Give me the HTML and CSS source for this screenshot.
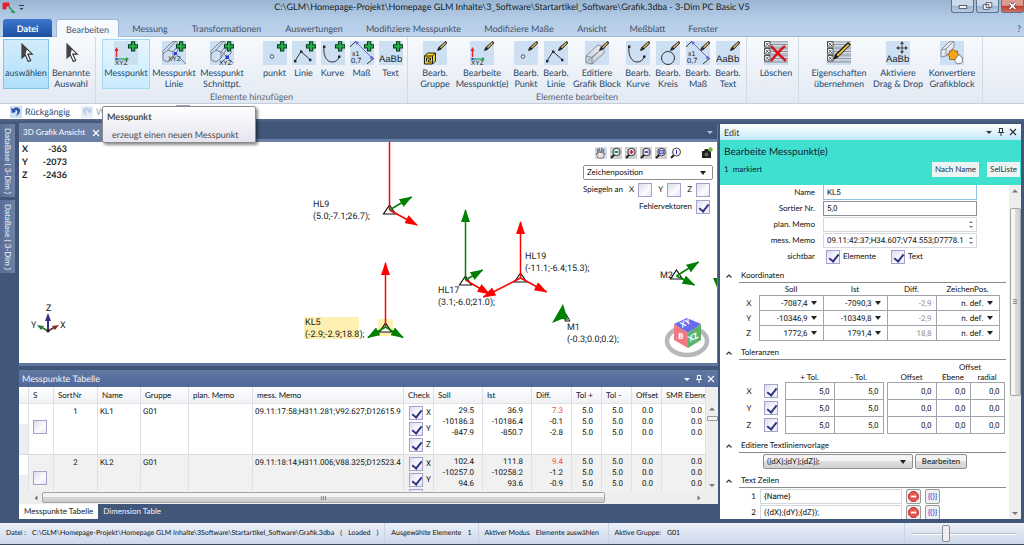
FILE: index.html
```html
<!DOCTYPE html>
<html lang="de">
<head>
<meta charset="utf-8">
<title>Grafik.3dba - 3-Dim PC Basic V5</title>
<link rel="stylesheet" href="styles.css">
</head>
<body>
<svg class="defs" aria-hidden="true">
  <defs>
    <linearGradient id="gPrism" x1="0" y1="0" x2="0" y2="1"><stop offset="0" stop-color="#e9edf2"/><stop offset="1" stop-color="#c3ccd6"/></linearGradient>
    <symbol id="bg" viewBox="0 0 24 24"><rect width="24" height="24" fill="#cddff3"/></symbol>
    <symbol id="plus" viewBox="0 0 24 24"><path d="M17.500.8h3.200v3h3v3.200h-3v3h-3.200v-3h-3v-3.200h3z" fill="#22b04c" stroke="#0d3d1b" stroke-width="1.100"/></symbol>
    <symbol id="pencil" viewBox="0 0 24 24"><path d="M14.500 9.500l1-2.800L22.500.5l1.500 1.300-6.500 6.700z" fill="#2b2415" stroke="#222" stroke-width=".8"/><path d="M17.500 6.700l5-5" stroke="#dfb968" stroke-width="1.400"/></symbol>
    <symbol id="arrow" viewBox="0 0 24 24"><path d="M8 3v14l3.300-3 3 6.500 2.400-1.100-3-6.300h4.600z" fill="#fff" stroke="#333" stroke-width="1.100"/><path d="M8 3v14l3.300-3 1.700-6z" fill="#444"/></symbol>
    <symbol id="axes" viewBox="0 0 24 24"><path d="M2.500 16V8" stroke="#e8202a" stroke-width="1.400"/><path d="M.5 10l2-4 2 4z" fill="#e8202a"/><path d="M1.500 18h11" stroke="#21a045" stroke-width="1.200"/><path d="M12 16l3 2-3 2z" fill="#21a045"/><circle cx="2.500" cy="18" r="1.200" fill="#3344dd"/><text x="1" y="24" font-size="6.500" class="ic">XYZ</text></symbol>
    <symbol id="prism" viewBox="0 0 24 24"><path d="M1 13l5-4 5 2v6l-5 4-5-2zM1 13V10L10 1l4-1 2 3v6L11 17M6 9L14 0M11 11l5-6" fill="none" stroke="#77818c" stroke-width="1"/></symbol>
    <symbol id="block" viewBox="0 0 24 24"><path d="M1 12l12-11 6 2v6L7 20l-6-1.500z" fill="url(#gPrism)" stroke="#7c858f" stroke-width=".9"/><path d="M1 12l6 1.500V20M7 13.500L19 3M3 17l10-9" fill="none" stroke="#7c858f" stroke-width=".9"/></symbol>
    <symbol id="point" viewBox="0 0 24 24"><circle cx="9" cy="15.500" r="1.800" fill="#eef4fb" stroke="#444" stroke-width=".9"/></symbol>
    <symbol id="line" viewBox="0 0 24 24"><path d="M3 20l6-9.500 9 8" fill="none" stroke="#333" stroke-width="1"/><g fill="#222"><rect x="2" y="19" width="2.400" height="2.400"/><rect x="8" y="9.500" width="2.400" height="2.400"/><rect x="17" y="17.800" width="2.400" height="2.400"/></g></symbol>
    <symbol id="curve" viewBox="0 0 24 24"><path d="M3 6C2 15 6 21 11 21c4 0 6-2 7-5" fill="none" stroke="#333" stroke-width="1"/><g fill="#222"><rect x="2" y="4.500" width="2.400" height="2.400"/><rect x="17" y="14.500" width="2.400" height="2.400"/></g></symbol>
    <symbol id="circle" viewBox="0 0 24 24"><circle cx="12" cy="17" r="6.500" fill="none" stroke="#333" stroke-width="1"/></symbol>
    <symbol id="dim" viewBox="0 0 24 24"><path d="M0 6l6-6M17 23l7-6" stroke="#333" stroke-width="1"/><path d="M6 1l16 16" stroke="#6467e0" stroke-width="1"/><path d="M5 0l4 1.200L6.300 4zM23.500 18.500l-4.200-1.200 2.800-2.800z" fill="#6467e0"/><text x="2" y="14.500" font-size="7" class="ic">x1</text><text x="1" y="21.500" font-size="7.500" class="ic">0,7</text></symbol>
    <symbol id="aabb" viewBox="0 0 24 24"><text x="0" y="21" font-size="9.500" class="ic">AaBb</text></symbol>
    <symbol id="list" viewBox="0 0 24 24"><path d="M0 0h24v22H0z" fill="#aab4c0"/><path d="M6 3.500h18M6 10.500h18M6 17.500h18" stroke="#d3dae2" stroke-width="4"/><path d="M6 3.500h18M6 10.500h18M6 17.500h18" stroke="#8a94a0" stroke-width="1"/><g fill="#fff" stroke="#333" stroke-width=".8"><path d="M.5.5h5.500v5.500H.5zM.5 7.500h5.500V13H.5zM.5 14.500h5.500V20H.5z"/><path d="M1.500 1.500l3.500 3.500m0-3.500L1.500 5M1.500 8.500L5 12m0-3.500L1.500 12M1.500 15.500L5 19m0-3.500L1.500 19"/></g></symbol>
    <symbol id="lens" viewBox="0 0 12 12"><rect width="12" height="12" fill="#cfcfcf"/><path d="M1 11l4-4" stroke="#222" stroke-width="2"/><circle cx="6.500" cy="5" r="3.700" fill="#e8eef4" stroke="#333" stroke-width="1"/></symbol>
    <symbol id="pin" viewBox="0 0 8 8"><path d="M2 .5h4M2.500.5v4M5.500.5v4M1 4.500h6M4 4.500V8" stroke="currentColor" fill="none"/></symbol>
    <symbol id="x" viewBox="0 0 8 8"><path d="M1 1l6 6M7 1L1 7" stroke="currentColor" stroke-width="1.200" fill="none"/></symbol>
    <symbol id="down" viewBox="0 0 8 8"><path d="M1 3h6L4 6z" fill="currentColor"/></symbol>
    <symbol id="up" viewBox="0 0 8 8"><path d="M1 5.500h6L4 2.500z" fill="currentColor"/></symbol>
    <symbol id="chev" viewBox="0 0 8 8"><path d="M1.500 5.500L4 3l2.500 2.500" fill="none" stroke="#333" stroke-width="1.200"/></symbol>
    <symbol id="minus" viewBox="0 0 12 12"><path d="M4 .5h4L11.500 4v4L8 11.500H4L.5 8V4z" fill="#e5554b" stroke="#b53a32"/><path d="M3 6h6" stroke="#fff" stroke-width="2"/></symbol>
    <marker id="mr" markerUnits="userSpaceOnUse" markerWidth="13" markerHeight="9" refX="12" refY="4.500" orient="auto"><path d="M0 0l13 4.500L0 9z" fill="#f00"/></marker>
    <marker id="mg" markerUnits="userSpaceOnUse" markerWidth="13" markerHeight="9" refX="12" refY="4.500" orient="auto"><path d="M0 0l13 4.500L0 9z" fill="#008000"/></marker>
  </defs>
</svg>

<header class="titlebar">
  <div class="side-l"><svg class="applogo" viewBox="0 0 22 12"><path d="M1 1h6v3H4v3H1zM7 4l1 3" fill="#e3202c" stroke="#e3202c"/><path d="M8 6l5 5M9 10h4" stroke="#2a9a4a" stroke-width="1.300" fill="none"/><path d="M17 3h5v1h-5zM17.500 6h4l-2 2z" fill="#334"/></svg></div>
  <h1 class="title">C:\GLM\Homepage-Projekt\Homepage GLM Inhalte\3_Software\Startartikel_Software\Grafik.3dba - 3-Dim PC Basic V5</h1>
  <div class="winbtns">
    <button class="winbtn" aria-label="Minimieren"><svg viewBox="0 0 22 12"><rect x="7.500" y="5.500" width="8" height="3" fill="#fff" stroke="#556"/></svg></button>
    <button class="winbtn" aria-label="Wiederherstellen"><svg viewBox="0 0 22 12"><path d="M9.500 2.500h6v5h-6zM6.500 4.500h6v5h-6z" fill="#fff" stroke="#556"/></svg></button>
    <button class="winbtn close" aria-label="Schließen"><svg viewBox="0 0 22 12"><path d="M8 3l6 6M14 3L8 9" stroke="#533" stroke-width="3"/><path d="M8 3l6 6M14 3L8 9" stroke="#fff" stroke-width="1.800"/></svg></button>
  </div>
</header>

<nav class="tabs">
  <button class="tab file">Datei</button>
  <button class="tab active">Bearbeiten</button>
  <button class="tab t3">Messung</button>
  <button class="tab t4">Transformationen</button>
  <button class="tab t5">Auswertungen</button>
  <button class="tab t6">Modifiziere Messpunkte</button>
  <button class="tab t7">Modifiziere Maße</button>
  <button class="tab t8">Ansicht</button>
  <button class="tab t9">Meßblatt</button>
  <button class="tab t10">Fenster</button>
  <button class="tab help" aria-label="Hilfe">?</button>
</nav>

<section class="ribbon">
  <div class="group">
    <div class="tools first">
      <button class="tool w46 sel"><svg><use href="#arrow"/></svg>auswählen</button>
      <button class="tool w42"><svg><use href="#arrow"/></svg>Benannte<br>Auswahl</button>
    </div>
  </div>
  <div class="group">
    <div class="tools add">
      <button class="tool w48 hot"><svg><use href="#bg"/><use href="#axes"/><use href="#plus"/></svg>Messpunkt</button>
      <button class="tool w48"><svg><use href="#bg"/><use href="#prism"/><path d="M15 14l9 9" stroke="#778"/><rect x="12" y="11" width="3" height="3" fill="#2a3be0"/><text x="6" y="20" font-size="6.500" class="ic">XYZ</text><use href="#plus"/></svg>Messpunkt<br>Linie</button>
      <button class="tool w48"><svg><use href="#bg"/><use href="#prism"/><path d="M12 11l11 11M22 11L11 22" stroke="#778"/><rect x="15.500" y="14.500" width="3.500" height="3.500" fill="#2a3be0"/><text x="9" y="24" font-size="6.500" class="ic">XYZ</text><use href="#plus"/></svg>Messpunkt<br>Schnittpt.</button>
      <button class="tool w29 gapped"><svg><use href="#bg"/><use href="#point"/><use href="#plus"/></svg>punkt</button>
      <button class="tool w29"><svg><use href="#bg"/><use href="#line"/><use href="#plus"/></svg>Linie</button>
      <button class="tool w29"><svg><use href="#bg"/><use href="#curve"/><use href="#plus"/></svg>Kurve</button>
      <button class="tool w29"><svg><use href="#bg"/><use href="#dim"/><use href="#plus"/></svg>Maß</button>
      <button class="tool w29"><svg><use href="#bg"/><use href="#aabb"/><use href="#plus"/></svg>Text</button>
    </div>
    <div class="caption">Elemente hinzufügen</div>
  </div>
  <div class="group">
    <div class="tools edit">
      <button class="tool w36"><svg><use href="#bg"/><path d="M1.500 15l3-3h8v8l-3 3h-8z" fill="#f6d21c" stroke="#222"/><path d="M1.500 15h8v8M9.500 15l3-3M3.500 20.500v-3.500h4v2h-2v2h3" fill="none" stroke="#222"/><use href="#pencil"/></svg>Bearb.<br>Gruppe</button>
      <button class="tool w58"><svg><use href="#bg"/><use href="#axes"/><use href="#pencil"/></svg>Bearbeite<br>Messpunkt(e)</button>
      <button class="tool w30"><svg><use href="#bg"/><use href="#point"/><use href="#pencil"/></svg>Bearb.<br>Punkt</button>
      <button class="tool w30"><svg><use href="#bg"/><use href="#line"/><use href="#pencil"/></svg>Bearb.<br>Linie</button>
      <button class="tool w52"><svg><use href="#bg"/><use href="#block" y="3"/><use href="#pencil"/></svg>Editiere<br>Grafik Block</button>
      <button class="tool w30"><svg><use href="#bg"/><use href="#curve"/><use href="#pencil"/></svg>Bearb.<br>Kurve</button>
      <button class="tool w30"><svg><use href="#bg"/><use href="#circle"/><use href="#pencil"/></svg>Bearb.<br>Kreis</button>
      <button class="tool w30"><svg><use href="#bg"/><use href="#dim"/><use href="#pencil"/></svg>Bearb.<br>Maß</button>
      <button class="tool w30"><svg><use href="#bg"/><use href="#aabb"/><use href="#pencil"/></svg>Bearb.<br>Text</button>
    </div>
    <div class="caption">Elemente bearbeiten</div>
  </div>
  <div class="group">
    <div class="tools del">
      <button class="tool w40"><svg><use href="#bg"/><use href="#list"/><path d="M7 5c4 4 9 10 15 15M21 5C16 9 11 15 7 20" stroke="#d8141c" stroke-width="2.500" fill="none"/></svg>Löschen</button>
    </div>
  </div>
  <div class="group">
    <div class="tools props">
      <button class="tool w62"><svg><use href="#bg"/><use href="#list"/><path d="M6 19l2-5.500L21 1l3 2.500L11 16.500z" fill="#1d1a12"/><path d="M9.500 14L21 2.800l1.500 1.200L11 15.500z" fill="#e6b84c"/></svg>Eigenschaften<br>übernehmen</button>
      <button class="tool w56"><svg><use href="#bg"/><path d="M16 2v10M11 7h10" stroke="#444"/><path d="M16 0l2 3h-4zM16 13l2-3h-4zM10 7l3-2v4zM22 7l-3-2v4z" fill="#444"/><use href="#aabb"/></svg>Aktiviere<br>Drag &amp; Drop</button>
      <button class="tool w52"><svg><use href="#bg"/><path d="M1 9l8-8 5-1v6l-8 9-5 1zM1 9l5-1v7M6 8l8-8" fill="#e6eaf0" stroke="#88919c"/><path d="M9.500 10h2c0-2 3-2 3 0h3v2.500c2 0 2 3 0 3v3h-8v-3c-2 0-2-3 0-3z" fill="#f5a41a" stroke="#8a5a10" stroke-width=".8"/><path d="M16 16l2-1c0-2 3-1 3 1l2 1-1 2c1 1 1 3-1 3l-4 1-1-2c-2 0-2-2 0-3z" fill="#fff" stroke="#777" stroke-width=".9"/></svg>Konvertiere<br>Grafikblock</button>
    </div>
  </div>
  <div class="tooltip" role="tooltip"><strong>Messpunkt</strong><span>erzeugt einen neuen Messpunkt</span></div>
</section>

<div class="quickbar">
  <button class="quick"><svg viewBox="0 0 12 12"><rect width="12" height="12" fill="#cddff3"/><path d="M1 2l1 5 4-1-1.500-1.200C7 3 9 5 6 10c6-3 5-9-.5-8.500L3 3z" fill="#2a50a8"/></svg>Rückgängig</button>
  <button class="quick" disabled><svg viewBox="0 0 12 12"><rect width="12" height="12" fill="#cddff3"/><path d="M11 2l-1 5-4-1 1.500-1.200C5 3 3 5 6 10 0 7 1 1 6.500 1.500L9 3z" fill="#7a9ad0"/></svg>Wiederherstellen</button>
  <input class="check" type="checkbox" aria-label="Option">
</div>

<main class="workspace">
  <aside class="dock">
    <button class="docktab">DataBase ( 3-Dim )</button>
    <button class="docktab">DataBase ( 3-Dim )</button>
  </aside>

  <div class="center">
    <section class="view">
      <div class="viewtabs">
        <button class="viewtab">3D Grafik Ansicht <svg class="g8"><use href="#x"/></svg></button>
        <svg class="g8 more"><use href="#down"/></svg>
      </div>
      <div class="canvas">
        <svg class="scene">
          <g transform="translate(-19 -142)">
            <rect x="304" y="317" width="55" height="22" fill="#fdf0b0"/>
            <rect x="378" y="319" width="15" height="17" fill="#fdf0b0"/>
            <g fill="#fff" stroke="#111" stroke-width="1.200">
              <path d="M389.500 205l-6 9h12zM465.500 276l-6 9h12zM520.500 273l-6 9h12zM385.500 323l-6 9h12zM676.500 270l-6 9h12z"/>
            </g>
            <g fill="none" stroke="#f00" stroke-width="1.500" marker-end="url(#mr)">
              <path d="M389.500 210l27.500 15"/>
              <path d="M385.500 328V263"/>
              <path d="M465.500 280l24 14"/>
              <path d="M520.500 278V222"/>
              <path d="M520.500 278l26 14"/>
              <path d="M520.500 278l-37 19"/>
            </g>
            <path d="M389.500 210V142" stroke="#f00" stroke-width="1.500"/>
            <g fill="none" stroke="#008000" stroke-width="1.500" marker-end="url(#mg)">
              <path d="M389.500 210l22-13"/>
              <path d="M465.500 280V210"/>
              <path d="M465.500 280l17-10"/>
              <path d="M385.500 327l17.500 10.500"/>
              <path d="M385.500 327l-17.500 10.500"/>
              <path d="M676.500 276l22-14"/>
              <path d="M676.500 276l18 9"/>
            </g>
            <path d="M566 314l4 7h-5z" fill="#fff" stroke="#111"/>
            <path d="M563 304l5 16-6-1-10 4z" fill="#008000"/>
            <path d="M713 278h6v14z" fill="#008000"/>
            <g class="scenetext">
              <text x="313" y="207">HL9</text><text x="313" y="219">(5.0;-7.1;26.7);</text>
              <text x="438" y="293">HL17</text><text x="438" y="305">(3.1;-6.0;21.0);</text>
              <text x="305" y="325">KL5</text><text x="305" y="337">(-2.9;-2.9;18.8);</text>
              <text x="525" y="259">HL19</text><text x="525" y="271">(-11.1;-6.4;15.3);</text>
              <text x="567" y="330">M1</text><text x="567" y="342">(-0.3;0.0;0.2);</text>
              <text x="660" y="278">M2</text>
              <text x="46" y="311">Z</text><text x="31" y="328">Y</text><text x="60" y="328">X</text>
            </g>
            <path d="M48 331V318" stroke="#32327e" stroke-width="2"/><path d="M45 321l3-8 3 8z" fill="#32327e"/>
            <path d="M48 331l-7-4" stroke="#2c7a36" stroke-width="2"/><path d="M37 325l7 1-3 4z" fill="#2c7a36"/>
            <path d="M48 331l7-4" stroke="#7c3030" stroke-width="2"/><path d="M59 325l-7 1 3 4z" fill="#7c3030"/>
            <circle cx="48" cy="331" r="1.500" fill="#223"/>
          </g>
        </svg>
        <table class="coords">
          <tr><th>X</th><td>-363</td></tr>
          <tr><th>Y</th><td>-2073</td></tr>
          <tr><th>Z</th><td>-2436</td></tr>
        </table>
        <div class="viewopts">
          <div class="lenses">
            <button aria-label="Verschieben"><svg viewBox="0 0 12 12"><rect width="12" height="12" fill="#cfdcec"/><path d="M3 11L1 6l2 1-1-5 2 4 0-5 1.500 5L7 1v5l2-4-1 5 2-1-2 5z" fill="#f3e3d6" stroke="#556" stroke-width=".7"/></svg></button>
            <button aria-label="Zoom"><svg viewBox="0 0 12 12"><use href="#lens"/><path d="M4.500 5h4" stroke="#2a9a3a" stroke-width="2"/></svg></button>
            <button aria-label="Vergrößern"><svg viewBox="0 0 12 12"><use href="#lens"/><path d="M4.500 5h4M6.500 3v4" stroke="#d22" stroke-width="1.500"/></svg></button>
            <button aria-label="Verkleinern"><svg viewBox="0 0 12 12"><use href="#lens"/><path d="M4.500 5h4" stroke="#22c" stroke-width="1.500"/></svg></button>
            <button aria-label="Fenster"><svg viewBox="0 0 12 12"><use href="#lens"/><path d="M4.500 3.500h4v3h-4z" fill="#aab8f8" stroke="#33c" stroke-width=".8"/></svg></button>
            <button aria-label="1 zu 1"><svg viewBox="0 0 12 12"><path d="M1 11l4-4" stroke="#222" stroke-width="2"/><circle cx="6.500" cy="5" r="4" fill="#f4f4f4" stroke="#444"/><path d="M6.500 3v4" stroke="#33c"/></svg></button>
            <button class="cam" aria-label="Foto"><svg viewBox="0 0 12 12"><path d="M1 4h2l1-2h3l1 2h2v7H1z" fill="#222"/><circle cx="5.500" cy="7.500" r="2" fill="#666"/><circle cx="9.500" cy="2.500" r="2.200" fill="#7ab53a"/></svg></button>
          </div>
          <span class="pick wide"><select aria-label="Ansicht"><option>Zeichenposition</option></select></span>
          <div class="mirror"><span>Spiegeln an</span>
            <label>X <input class="check" type="checkbox"></label>
            <label>Y <input class="check" type="checkbox"></label>
            <label>Z <input class="check" type="checkbox"></label>
          </div>
          <div class="mirror"><label>Fehlervektoren <input class="check" type="checkbox" checked></label></div>
        </div>
        <svg class="cube" viewBox="0 0 46 42"><ellipse cx="23" cy="24" rx="20" ry="14" fill="none" stroke="#b8b8bc" stroke-width="4.500"/><path d="M10 7L23 1l14 6-13 9z" fill="#6a6af0"/><path d="M10 7l14 9v15l-14-8z" fill="#f07a80"/><path d="M37 7l-13 9v15l13-8z" fill="#5cb268"/><g fill="#fff" font-weight="bold" font-family="Open Sans" font-size="8"><text transform="translate(18 11) rotate(-28)">XY</text><text x="14" y="22">B</text><text transform="translate(26 25) rotate(-28)">XZ</text></g></svg>
      </div>
    </section>

    <section class="tablepanel">
      <header class="phead"><h2>Messpunkte Tabelle</h2><svg class="g8"><use href="#down"/></svg><svg class="g8"><use href="#pin"/></svg><svg class="g8"><use href="#x"/></svg></header>
      <div class="tarea">
        <div class="tclip">
          <table class="grid">
            <colgroup><col class="c10"><col class="c25"><col class="c44"><col class="c43"><col class="c48"><col class="c64"><col><col class="c30"><col class="c49"><col class="c49"><col class="c40"><col class="c30"><col class="c30"><col class="c30"><col class="c44"></colgroup>
            <thead><tr><th></th><th>S</th><th>SortNr</th><th>Name</th><th>Gruppe</th><th>plan. Memo</th><th>mess. Memo</th><th>Check</th><th>Soll</th><th>Ist</th><th>Diff.</th><th>Tol +</th><th>Tol -</th><th>Offset</th><th>SMR Ebene</th></tr></thead>
            <tbody>
              <tr><td class="rowhead"></td><td class="pickrow"><input class="check" type="checkbox" aria-label="Zeile 1"></td><td class="c">1</td><td>KL1</td><td>G01</td><td></td><td>09.11:17:58;H311.281;V92.627;D12615.9</td>
                <td class="checks"><label><input class="check" type="checkbox" checked>X</label><label><input class="check" type="checkbox" checked>Y</label><label><input class="check" type="checkbox" checked>Z</label></td>
                <td class="n">29.5<br>-10186.3<br>-847.9</td><td class="n">36.9<br>-10186.4<br>-850.7</td><td class="n"><em>7.3</em><br>-0.1<br>-2.8</td><td class="n">5.0<br>5.0<br>5.0</td><td class="n">5.0<br>5.0<br>5.0</td><td class="n">0.0<br>0.0<br>0.0</td><td class="n last">0.0<br>0.0<br>0.0</td></tr>
              <tr class="alt"><td class="rowhead"></td><td class="pickrow"><input class="check" type="checkbox" aria-label="Zeile 2"></td><td class="c">2</td><td>KL2</td><td>G01</td><td></td><td>09.11:18:14;H311.006;V88.325;D12523.4</td>
                <td class="checks"><label><input class="check" type="checkbox" checked>X</label><label><input class="check" type="checkbox" checked>Y</label><label><input class="check" type="checkbox" checked>Z</label></td>
                <td class="n">102.4<br>-10257.0<br>94.6</td><td class="n">111.8<br>-10258.2<br>93.6</td><td class="n"><em>9.4</em><br>-1.2<br>-0.9</td><td class="n">5.0<br>5.0<br>5.0</td><td class="n">5.0<br>5.0<br>5.0</td><td class="n">0.0<br>0.0<br>0.0</td><td class="n last">0.0<br>0.0<br>0.0</td></tr>
            </tbody>
          </table>
        </div>
        <div class="vbar"><svg class="g8"><use href="#up"/></svg><i class="vthumb"></i><svg class="g8 end"><use href="#down"/></svg></div>
      </div>
      <div class="hbar"><svg class="g8"><path d="M5.500 1.500v5L2.500 4z" fill="#777"/></svg><i class="hthumb"></i><svg class="g8 end"><path d="M2.500 1.500v5l3-2.500z" fill="#777"/></svg></div>
      <div class="btabs"><button class="btab on">Messpunkte Tabelle</button><button class="btab">Dimension Table</button></div>
    </section>
  </div>

  <aside class="edit-panel">
    <header class="ehead"><h2>Edit</h2><svg class="g8"><use href="#down"/></svg><svg class="g8"><use href="#pin"/></svg><svg class="g8"><use href="#x"/></svg></header>
    <div class="banner">
      <h3>Bearbeite Messpunkt(e)</h3>
      <div class="brow"><span>1&nbsp; markiert</span><button class="flat">Nach Name</button><button class="flat">SelListe</button></div>
    </div>
    <div class="ebody">
      <form class="form">
        <div class="fields">
          <label for="name">Name</label><input id="name" class="txt focus" value="KL5">
          <label for="sort">Sortier Nr.</label><input id="sort" class="txt strong" value="5,0">
          <label for="plan">plan. Memo</label><span class="spin"><input id="plan" class="txt" value=""></span>
          <label for="mess">mess. Memo</label><span class="spin"><input id="mess" class="txt" value="09.11:42:37;H34.607;V74.553;D7778.1"></span>
          <span class="lab">sichtbar</span><span class="vis"><label><input class="check" type="checkbox" checked>Elemente</label><label><input class="check" type="checkbox" checked>Text</label></span>
        </div>

        <h4 class="sec"><svg class="g8"><use href="#chev"/></svg><span>Koordinaten</span></h4>
        <table class="coordtab">
          <colgroup><col class="c34"><col class="c64"><col class="c64"><col class="c49"><col class="c63"></colgroup>
          <tr><th></th><th>Soll</th><th>Ist</th><th>Diff.</th><th>ZeichenPos.</th></tr>
          <tr><th class="ax">X</th><td><span class="pick"><select aria-label="Soll X"><option>-7087,4</option></select></span></td><td><span class="pick"><select aria-label="Ist X"><option>-7090,3</option></select></span></td><td class="dim">-2,9</td><td><span class="pick"><select aria-label="Pos X"><option>n. def.</option></select></span></td></tr>
          <tr><th class="ax">Y</th><td><span class="pick"><select aria-label="Soll Y"><option>-10346,9</option></select></span></td><td><span class="pick"><select aria-label="Ist Y"><option>-10349,8</option></select></span></td><td class="dim">-2,9</td><td><span class="pick"><select aria-label="Pos Y"><option>n. def.</option></select></span></td></tr>
          <tr><th class="ax">Z</th><td><span class="pick"><select aria-label="Soll Z"><option>1772,6</option></select></span></td><td><span class="pick"><select aria-label="Ist Z"><option>1791,4</option></select></span></td><td class="dim">18,8</td><td><span class="pick"><select aria-label="Pos Z"><option>n. def.</option></select></span></td></tr>
        </table>

        <h4 class="sec"><svg class="g8"><use href="#chev"/></svg><span>Toleranzen</span></h4>
        <table class="toltab">
          <colgroup><col class="c34"><col class="c26"><col class="c49"><col class="c49"><col class="c4"><col class="c49"><col class="c34"><col class="c34"></colgroup>
          <tr class="thd"><th></th><th></th><th></th><th></th><th></th><th></th><th colspan="2">Offset</th></tr>
          <tr class="thd"><th></th><th></th><th>+ Tol.</th><th>- Tol.</th><th></th><th>Offset</th><th>Ebene</th><th>radial</th></tr>
          <tr><th class="ax">X</th><td class="bare"><input class="check" type="checkbox" aria-label="X" checked></td><td><input class="num" aria-label="+ Tol. X" value="5,0"></td><td><input class="num" aria-label="- Tol. X" value="5,0"></td><td class="bare"></td><td><input class="num" aria-label="Offset X" value="0,0"></td><td><input class="num" aria-label="Ebene X" value="0,0"></td><td><input class="num" aria-label="radial X" value="0,0"></td></tr>
          <tr><th class="ax">Y</th><td class="bare"><input class="check" type="checkbox" aria-label="Y" checked></td><td><input class="num" aria-label="+ Tol. Y" value="5,0"></td><td><input class="num" aria-label="- Tol. Y" value="5,0"></td><td class="bare"></td><td><input class="num" aria-label="Offset Y" value="0,0"></td><td><input class="num" aria-label="Ebene Y" value="0,0"></td><td><input class="num" aria-label="radial Y" value="0,0"></td></tr>
          <tr><th class="ax">Z</th><td class="bare"><input class="check" type="checkbox" aria-label="Z" checked></td><td><input class="num" aria-label="+ Tol. Z" value="5,0"></td><td><input class="num" aria-label="- Tol. Z" value="5,0"></td><td class="bare"></td><td><input class="num" aria-label="Offset Z" value="0,0"></td><td><input class="num" aria-label="Ebene Z" value="0,0"></td><td><input class="num" aria-label="radial Z" value="0,0"></td></tr>
        </table>

        <h4 class="sec"><svg class="g8"><use href="#chev"/></svg><span>Editiere Textlinienvorlage</span></h4>
        <div class="template"><span class="pick wide grey"><select aria-label="Vorlage"><option>({dX};{dY};{dZ});</option></select></span><button type="button" class="btn">Bearbeiten</button></div>

        <h4 class="sec"><svg class="g8"><use href="#chev"/></svg><span>Text Zeilen</span></h4>
        <div class="lines">
          <label for="l1">1</label><input id="l1" class="txt" value="{Name}"><button type="button" class="sq" aria-label="Entfernen"><svg viewBox="0 0 12 12"><use href="#minus"/></svg></button><button type="button" class="sq br">{()}</button>
          <label for="l2">2</label><input id="l2" class="txt" value="({dX};{dY};{dZ});"><button type="button" class="sq" aria-label="Entfernen"><svg viewBox="0 0 12 12"><use href="#minus"/></svg></button><button type="button" class="sq br">{()}</button>
        </div>
      </form>
      <div class="vbar side"><svg class="g8"><use href="#up"/></svg><i class="bigthumb"></i><svg class="g8 end"><use href="#down"/></svg></div>
    </div>
  </aside>
</main>

<footer class="status">
  <div class="cell s1"><span>Datei :</span><span>C:\GLM\Homepage-Projekt\Homepage GLM Inhalte\3Software\Startartikel_Software\Grafik.3dba</span><span>(</span><span>Loaded</span><span>)</span></div>
  <div class="cell s2"><span>Ausgewählte Elemente</span><span>1</span></div>
  <div class="cell s3"><span>Aktiver Modus</span><span>Elemente auswählen</span></div>
  <div class="cell s4"><span>Aktive Gruppe:</span><span>G01</span></div>
  <div class="cell s5"><input class="zoomer" type="range" min="0" max="100" value="32" aria-label="Zoom"></div>
</footer>
</body>
</html>
```
FILE: styles.css
```css
:root {
  --ui: Lato, "Open Sans", "Noto Sans", sans-serif;
  --data: Roboto, "Liberation Sans", sans-serif;
  --navy: #42567a;
}
* { box-sizing: border-box; }
body { margin: 0; height: 100vh; display: flex; flex-direction: column; overflow: hidden; font: 8px/11px var(--ui); color: #111; background: var(--navy); text-rendering: geometricPrecision; }
button, input, select { font: inherit; color: inherit; margin: 0; padding: 0; border: 0; background: none; border-radius: 0; text-rendering: inherit; }
button { cursor: pointer; white-space: nowrap; }
h1, h2, h3, h4 { margin: 0; font-weight: normal; }
svg { display: block; flex: none; }
.defs { position: absolute; width: 0; height: 0; }
.ic { font-family: "Liberation Sans", sans-serif; fill: #222; }
.g8 { width: 8px; height: 8px; }

/* title bar */
.titlebar { flex: none; height: 19px; display: flex; align-items: flex-start; background: linear-gradient(#99b5d3, #b5cce7); }
.side-l { width: 73px; }
.applogo { width: 22px; height: 12px; margin: 2px; }
.title { flex: 1; text-align: center; font-size: 9px; line-height: 14px; color: #111a24; white-space: nowrap; }
.winbtns { display: flex; gap: 2px; }
.winbtn { width: 23px; height: 13px; border: 1px solid #5e7390; border-top: 0; border-radius: 0 0 3px 3px; background: linear-gradient(#cbd9ea 45%, #9fb5d0 50%, #b9cce3); }
.winbtn.close { background: linear-gradient(#dd9a90 45%, #c0392b 50%, #d2705c); }
.winbtn svg { width: 21px; height: 12px; }

/* ribbon tabs */
.tabs { flex: none; height: 18px; display: flex; background: linear-gradient(#b5cce7, #bdd3ec); font-size: 9px; border-bottom: 1px solid #a3b8d2; }
.tab { height: 18px; line-height: 19px; color: #3f4f66; text-align: center; }
.tab.file { margin-left: 3px; width: 49px; color: #fff; font-weight: 700; border-radius: 3px 3px 0 0; background: linear-gradient(#3c78cf, #1e4f9f); }
.tab.active { margin-left: 4px; width: 63px; color: #3f5478; background: #f6f9fd; border: 1px solid #9db6d4; border-bottom: 0; border-radius: 3px 3px 0 0; }
.t3 { width: 62px; } .t4 { width: 91px; } .t5 { width: 84px; } .t6 { width: 115px; }
.t7 { width: 96px; } .t8 { width: 50px; } .t9 { width: 61px; } .t10 { width: 50px; }
.help { margin-left: auto; width: 10px; }

/* ribbon */
.ribbon { position: relative; flex: none; height: 67px; display: flex; background: linear-gradient(#f7fafd, #e3e9f3); border-bottom: 1px solid #c2cedf; }
.group { display: flex; flex-direction: column; justify-content: space-between; border-right: 1px solid #d2dae6; }
.tools { display: flex; padding-top: 2px; }
.tools.first { padding: 2px 3px 0 3px; gap: 1px; }
.tools.add { padding-left: 6px; padding-right: 2px; }
.tools.edit { padding-left: 9px; padding-right: 3px; }
.tools.del { padding-left: 9px; padding-right: 2px; }
.tools.props { padding-left: 9px; padding-right: 4px; }
.tool { height: 50px; display: flex; flex-direction: column; align-items: center; padding-top: 1px; border: 1px solid transparent; font-size: 9px; line-height: 11px; color: #1f4566; }
.tool svg { width: 24px; height: 24px; margin-bottom: 2px; }
.tool.sel { background: linear-gradient(#d3ecfa, #b0e0fb); border-color: #7fc4ea; }
.tool.hot { background: linear-gradient(#e6f5fd, #c9ebfd); border-color: #a5d8f2; }
.gapped { margin-left: 14px; }
.w29 { width: 29px; } .w30 { width: 30px; } .w36 { width: 36px; } .w40 { width: 40px; } .w42 { width: 42px; }
.w46 { width: 46px; } .w48 { width: 48px; } .w52 { width: 52px; } .w56 { width: 56px; } .w58 { width: 58px; } .w62 { width: 62px; }
.caption { text-align: center; font-size: 9px; line-height: 13px; color: #5a6473; }
.tooltip { position: absolute; left: 102px; top: 69px; z-index: 5; width: 154px; height: 37px; padding: 4px; display: flex; flex-direction: column; gap: 7px; font-size: 9px; color: #4a4a4a; background: linear-gradient(#fff, #e4e5ef); border: 1px solid #8a8a8a; border-radius: 2px; box-shadow: 2px 2px 3px rgba(0, 0, 0, .45); }
.tooltip span { padding-left: 5px; white-space: nowrap; }

/* quick bar */
.quickbar { flex: none; height: 15px; display: flex; align-items: center; padding-left: 10px; background: #fff; }
.quick { display: flex; align-items: center; gap: 3px; width: 71px; color: #2b4a6b; font-size: 9px; }
.quick svg { width: 12px; height: 12px; }
.quick:disabled { opacity: .5; }
.quickbar .check { margin-left: 24px; }

/* controls */
.check { appearance: none; flex: none; position: relative; width: 14px; height: 14px; border: 1px solid #a3a2cb; background: linear-gradient(135deg, #dcdcee, #fbfbff 60%, #e6e6f5); }
.check:checked::after { content: ""; position: absolute; left: 4px; top: 1px; width: 4px; height: 8px; border: solid #333583; border-width: 0 2px 2px 0; transform: rotate(38deg); }
.pick { position: relative; display: block; }
.pick select { appearance: none; width: 100%; height: 100%; padding-right: 15px; text-align: right; text-align-last: right; }
.pick::after { content: ""; position: absolute; right: 6px; top: 50%; margin-top: -2px; border: solid transparent; border-width: 4px 3px 0; border-top-color: #222; pointer-events: none; }
.pick.wide { border: 1px solid #8e8e8e; border-radius: 2px; background: #fff; }
.pick.wide select { text-align: left; text-align-last: left; padding-left: 3px; }
.pick.grey, .btn { background: linear-gradient(#f4f4f4 45%, #dedede 50%, #d2d2d2); }

/* workspace */
.workspace { flex: 1; min-height: 0; display: flex; padding: 5px 3px 4px 0; background: linear-gradient(#56698c, var(--navy) 4px); }
.dock { width: 15px; display: flex; flex-direction: column; gap: 3px; }
.docktab { width: 15px; height: 73px; writing-mode: vertical-rl; line-height: 15px; font-size: 8px; color: #f0f3f9; background: linear-gradient(90deg, #5a6e96, #6d80a6); }
.center { flex: 1; min-width: 0; margin-left: 4px; margin-right: 2px; display: flex; flex-direction: column; gap: 4px; }
.view { flex: 1; min-height: 0; display: flex; flex-direction: column; border-bottom: 3px solid #62779f; border-right: 1px solid #62779f; }
.viewtabs { flex: none; height: 18px; display: flex; justify-content: space-between; align-items: center; border-bottom: 3px solid #6c80a6; }
.viewtab { height: 17px; width: 84px; padding: 2px 3px 0 4px; display: flex; justify-content: space-between; align-items: center; color: #fff; background: #6c80a6; font-size: 8px; }
.more { color: #b8c3d6; margin-right: 3px; }
.canvas { position: relative; flex: 1; min-height: 0; background: #fff; overflow: hidden; }
.scene { position: absolute; inset: 0; width: 100%; height: 100%; }
.scenetext { font: 9px var(--data); fill: #222; }
.coords { position: relative; border-collapse: collapse; font-size: 9px; line-height: 13px; font-weight: 700; color: #222; }
.coords th { width: 20px; padding: 0 0 0 3px; text-align: left; }
.coords td { width: 28px; padding: 0; text-align: right; }
.viewopts { position: absolute; right: 4px; top: 4px; width: 130px; display: flex; flex-direction: column; gap: 2px; font-size: 8px; }
.lenses { display: flex; gap: 3px; padding-left: 12px; margin-bottom: 4px; height: 13px; }
.lenses svg { width: 12px; height: 12px; }
.cam { margin-left: auto; }
.viewopts .pick { height: 15px; }
.mirror { display: flex; justify-content: space-between; align-items: center; height: 15px; padding-right: 3px; }
.mirror label { display: flex; align-items: center; gap: 4px; margin-left: auto; }
.mirror span { white-space: nowrap; }
.cube { position: absolute; right: 7px; bottom: 4px; width: 46px; height: 42px; }

/* table panel */
.tablepanel { flex: none; display: flex; flex-direction: column; }
.phead, .ehead { flex: none; display: flex; align-items: center; gap: 4px; }
.phead { height: 17px; padding: 0 3px; color: #f2f5fa; background: linear-gradient(#6178a2, #50689a); }
.phead h2, .ehead h2 { flex: 1; font-size: 9px; }
.tarea { height: 104px; display: flex; background: #fff; }
.tclip { flex: 1; min-width: 0; overflow: hidden; }
.grid { width: 100%; table-layout: fixed; border-collapse: separate; border-spacing: 0; white-space: nowrap; }
.grid th { height: 17px; padding: 0 4px; overflow: hidden; text-align: left; font-weight: normal; background: linear-gradient(#fff, #eff1f4); border-right: 1px solid #dcdee3; border-bottom: 1px solid #e2e4e8; }
.grid td { height: 51px; padding: 1px 2px 0; vertical-align: top; line-height: 14px; border-right: 1px solid #dfe0e4; border-bottom: 1px solid #d9dade; font-family: var(--data); }
.grid .alt td { background: #f1f1f2; }
.grid td.c { text-align: center; }
.grid td.n { text-align: right; line-height: 11px; padding: 1px 8px 0 0; }
.grid td.last { padding-right: 3px; }
.grid td.rowhead, .grid .alt td.rowhead { background: linear-gradient(#fff 40%, #eceef1 41%); }
.grid td.pickrow { vertical-align: middle; padding: 0 0 0 4px; }
.grid td.checks { padding: 1px 0 0 5px; }
.checks label { display: flex; align-items: center; gap: 3px; height: 16px; }
.grid em { font-style: normal; color: #f0503c; }
.c4 { width: 4px; } .c10 { width: 10px; } .c25 { width: 25px; } .c26 { width: 26px; } .c30 { width: 30px; } .c34 { width: 34px; } .c40 { width: 40px; } .c43 { width: 43px; }
.c44 { width: 44px; } .c48 { width: 48px; } .c49 { width: 49px; } .c63 { width: 63px; } .c64 { width: 64px; }
.vbar { flex: none; width: 12px; display: flex; flex-direction: column; align-items: center; padding: 2px 0; color: #777; background: #eeeeef; }
.tarea .vbar { padding-top: 18px; }
.end { margin: auto 0 0 auto; }
.vbar .end { margin: auto 0 0; }
.vthumb { width: 11px; height: 5px; margin-top: 3px; border: 1px solid #999; border-radius: 1px; background: #f5f5f5; }
.hbar { flex: none; height: 13px; display: flex; align-items: center; padding: 0 3px 0 13px; background: #eeeeef; }
.hthumb { width: 563px; height: 11px; margin-left: 2px; border: 1px solid #a5a5a5; border-radius: 2px; background: repeating-linear-gradient(90deg, #888 0 1px, transparent 1px 2px) center / 6px 4px no-repeat, linear-gradient(#f3f3f3 45%, #d7d7d8 50%, #c9c9cb); }
.hbar .end { margin: 0 12px 0 auto; }
.btabs { height: 15px; display: flex; }
.btab { padding: 0 5px; line-height: 15px; color: #eef2f8; font-size: 8px; }
.btab.on { background: #fff; color: #222; }

/* edit panel */
.edit-panel { flex: none; width: 301px; display: flex; flex-direction: column; background: #fff; }
.ehead { height: 16px; padding: 0 4px; color: #333; background: linear-gradient(#fff, #c2e9f8); }
.banner { flex: none; height: 45px; padding: 5px 1px 0 4px; background: #40e0d0; }
.banner h3 { font-size: 10px; line-height: 14px; color: #123; }
.brow { display: flex; align-items: center; gap: 8px; margin-top: 3px; color: #123; }
.brow span { flex: 1; }
.flat { height: 15px; padding: 0 3px; background: #ecf3f3; color: #234; }
.ebody { flex: 1; min-height: 0; display: flex; overflow: hidden; }
.form { flex: 1; min-width: 0; padding: 0 3px 0 5px; overflow: hidden; }
.fields { display: grid; grid-template-columns: 90px 154px; grid-auto-rows: 15px; column-gap: 8px; row-gap: 1px; }
.fields > label, .lab { text-align: right; line-height: 15px; }
.txt { display: block; width: 100%; height: 15px; padding: 0 3px; border: 1px solid #d5d8de; background: #fff; font-family: var(--data); }
.txt.focus { border-color: #8fc4e4; border-top: 0; }
.txt.strong { border-color: #8e9099; }
.spin { position: relative; }
.spin::before, .spin::after { content: ""; position: absolute; right: 4px; border: solid transparent; }
.spin::before { top: 4px; border-width: 0 2px 2px; border-bottom-color: #777; }
.spin::after { bottom: 4px; border-width: 2px 2px 0; border-top-color: #777; }
.vis { display: flex; gap: 15px; padding-left: 3px; }
.vis label { display: flex; align-items: center; gap: 3px; }
.sec { display: flex; align-items: center; gap: 6px; height: 17px; margin-top: 3px; }
.sec span { flex: 1; padding-left: 2px; line-height: 13px; border-bottom: 1px solid #8b8b8b; }
.coordtab, .toltab { table-layout: fixed; border-collapse: collapse; width: 274px; line-height: 11px; }
.toltab { width: 279px; margin-top: 1px; }
.coordtab th, .toltab th { padding: 0; font-weight: normal; height: 11px; }
.coordtab th.ax, .toltab th.ax { padding-left: 14px; }
.toltab .thd th { height: 10px; line-height: 10px; }
.coordtab td, .toltab td { height: 15px; padding: 0; border: 1px solid #a2a4ac; font-family: var(--data); }
.toltab td { height: 17px; }
.coordtab td.bare, .toltab td.bare { border: 0; }
.bare .check { display: block; margin-left: 5px; }
.coordtab .pick { height: 14px; }
.coordtab td.dim { text-align: right; padding-right: 4px; color: #8d8d92; }
.num { display: block; width: 100%; height: 14px; padding-right: 4px; text-align: right; }
.template { display: flex; gap: 2px; height: 15px; margin: 0 0 0 38px; }
.template .pick { width: 150px; }
.btn { width: 52px; border: 1px solid #8e8e8e; border-radius: 2px; }
.lines { display: grid; grid-template-columns: 31px 142px 15px 15px; grid-auto-rows: 15px; column-gap: 4px; row-gap: 1px; }
.lines label { text-align: right; line-height: 15px; }
.sq { width: 15px; height: 15px; border: 1px solid #999; border-radius: 2px; background: #f0f0f0; color: #2a2ae0; }
.sq svg { width: 11px; height: 11px; margin: auto; }
.side .bigthumb { width: 11px; height: 188px; margin-top: 13px; border: 1px solid #a5a5a5; border-radius: 2px; background: repeating-linear-gradient(#888 0 1px, transparent 1px 2px) center / 4px 6px no-repeat, linear-gradient(90deg, #f5f5f5 45%, #dcdcdd 50%, #d0d0d2); }

/* status bar */
.status { flex: none; height: 22px; display: flex; background: linear-gradient(#ebf0f8, #ccd8ea); border-bottom: 1px solid #3d4b5c; font-size: 7px; }
.cell { display: flex; align-items: center; gap: 6px; padding: 0 6px; border-right: 1px solid #c9d3e2; white-space: nowrap; }
.s3 { width: 130px; }
.s4 { flex: 1; }
.s5 { width: 119px; border: 0; }
.zoomer { appearance: none; width: 105px; height: 18px; }
.zoomer::-webkit-slider-runnable-track { height: 2px; background: #b9bfc9; border-bottom: 1px solid #fff; }
.zoomer::-webkit-slider-thumb { appearance: none; width: 8px; height: 17px; margin-top: -8px; border: 1px solid #8c8c8c; border-radius: 2px; background: #eee; }
```
